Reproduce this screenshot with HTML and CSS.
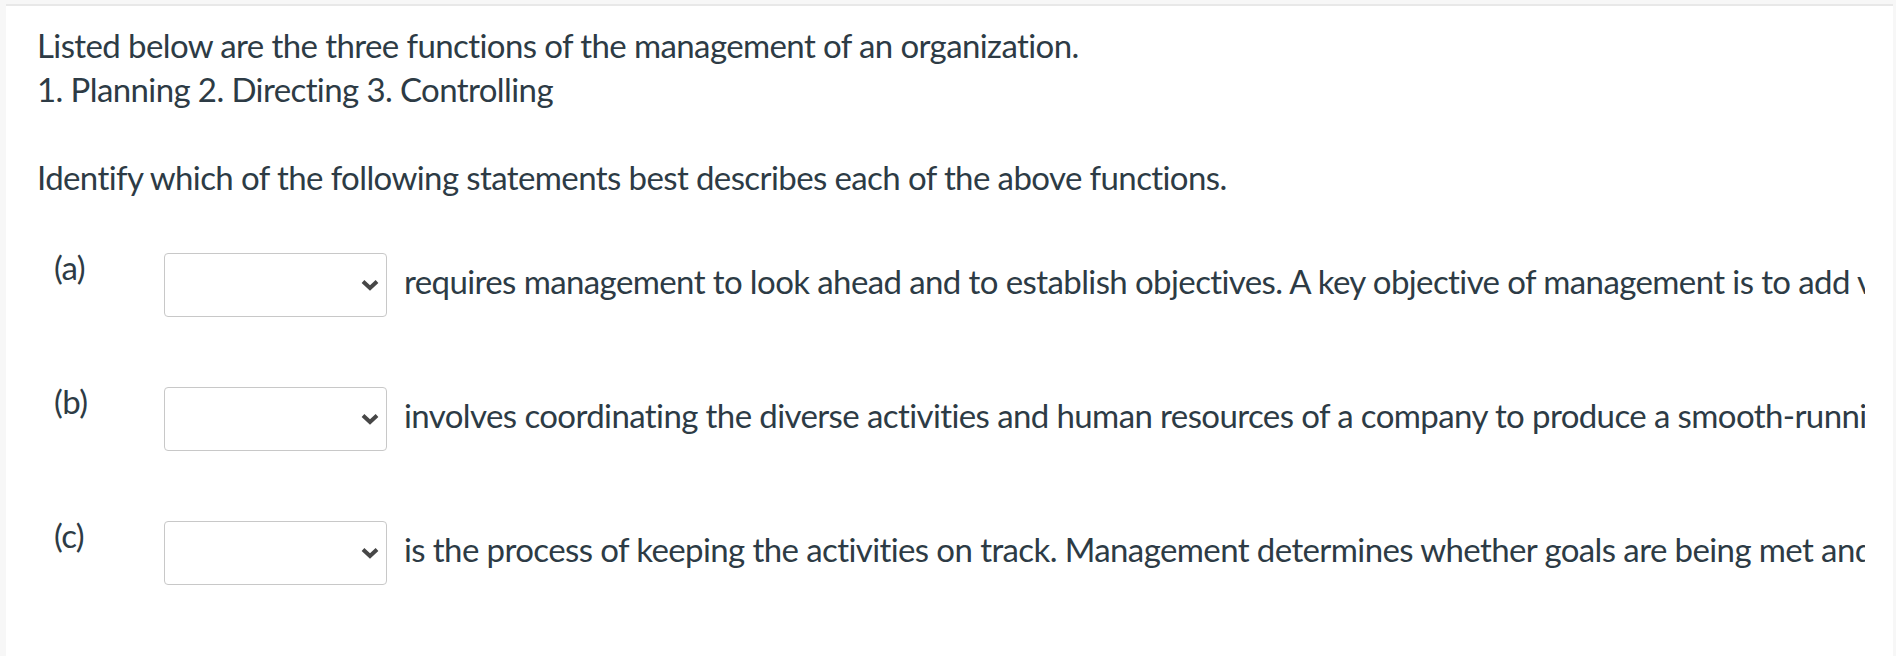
FILE: index.html
```html
<!DOCTYPE html>
<html>
<head>
<meta charset="utf-8">
<link rel="stylesheet" href="styles.css">
</head>
<body>
<div class="card">
  <div class="content">
    <p class="intro">Listed below are the three functions of the management of an organization.<br>1. Planning 2. Directing 3. Controlling<br><br>Identify which of the following statements best describes each of the above functions.</p>
    <div class="rows">
      <div class="row">
        <span class="label">(a)</span>
        <div class="select-wrap">
          <select class="select" aria-label="(a)"><option></option><option>Planning</option><option>Directing</option><option>Controlling</option></select>
          <svg class="chev" viewBox="0 0 18 12" width="18" height="12"><path d="M2 2.5 L9 9 L16 2.5" fill="none" stroke="#474747" stroke-width="4" stroke-linecap="butt" stroke-linejoin="miter"/></svg>
        </div>
        <span class="stmt">requires management to look ahead and to establish objectives. A key objective of management is to add value to the business.</span>
      </div>
      <div class="row">
        <span class="label">(b)</span>
        <div class="select-wrap">
          <select class="select" aria-label="(b)"><option></option><option>Planning</option><option>Directing</option><option>Controlling</option></select>
          <svg class="chev" viewBox="0 0 18 12" width="18" height="12"><path d="M2 2.5 L9 9 L16 2.5" fill="none" stroke="#474747" stroke-width="4" stroke-linecap="butt" stroke-linejoin="miter"/></svg>
        </div>
        <span class="stmt">involves coordinating the diverse activities and human resources of a company to produce a smooth-running operation.</span>
      </div>
      <div class="row">
        <span class="label">(c)</span>
        <div class="select-wrap">
          <select class="select" aria-label="(c)"><option></option><option>Planning</option><option>Directing</option><option>Controlling</option></select>
          <svg class="chev" viewBox="0 0 18 12" width="18" height="12"><path d="M2 2.5 L9 9 L16 2.5" fill="none" stroke="#474747" stroke-width="4" stroke-linecap="butt" stroke-linejoin="miter"/></svg>
        </div>
        <span class="stmt">is the process of keeping the activities on track. Management determines whether goals are being met and what changes are necessary.</span>
      </div>
    </div>
  </div>
</div>
</body>
</html>
```
FILE: styles.css
```css
html, body {
  margin: 0;
  padding: 0;
  background: #f7f7f7;
  height: 100%;
  overflow: hidden;
}
body {
  font-family: Lato, "Open Sans", "Liberation Sans", sans-serif;
  color: #2d3b45;
  font-size: 33px;
  line-height: 44px;
  letter-spacing: -0.6px;
  font-variant-ligatures: none;
  font-feature-settings: "liga" 0, "clig" 0;
}
.card {
  margin: 4px 3px 0 6px;
  border-top: 2px solid #e8e8e8;
  background: #ffffff;
  min-height: 700px;
  padding: 17px 28px 0 31px;
}
.content {
  overflow: hidden;
}
.intro {
  margin: 0;
}
.rows {
  margin-top: 46px;
  display: flex;
  flex-direction: column;
  gap: 62px;
}
.row {
  display: flex;
  align-items: flex-start;
  padding-left: 17px;
  white-space: nowrap;
}
.label {
  flex: 0 0 110px;
  width: 110px;
}
.select-wrap {
  position: relative;
  flex: 0 0 223px;
  width: 223px;
  height: 64px;
  margin-top: 8px;
  margin-right: 17px;
}
.select {
  appearance: none;
  -webkit-appearance: none;
  box-sizing: border-box;
  width: 100%;
  height: 100%;
  border: 1.5px solid #c8c8c8;
  border-radius: 4px;
  background: #ffffff;
  font: inherit;
  color: inherit;
  margin: 0;
}
.chev {
  position: absolute;
  right: 8px;
  top: 26px;
  pointer-events: none;
}
.stmt {
  margin-top: 14px;
  flex: 0 0 auto;
}
```
